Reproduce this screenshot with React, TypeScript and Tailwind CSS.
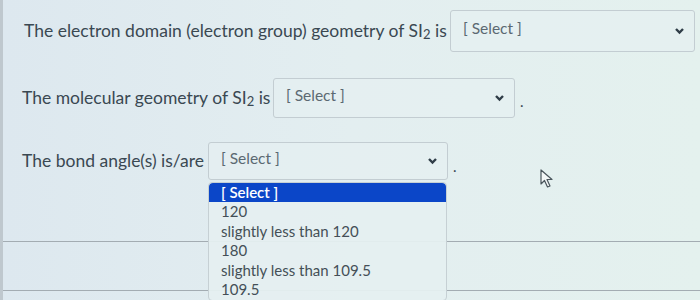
import React from 'react';

const OPTIONS = ['120', 'slightly less than 120', '180', 'slightly less than 109.5', '109.5'];

const Chevron = () => (
  <svg width="11" height="8" viewBox="0 0 11 8" className="shrink-0">
    <path d="M2 2 L5.5 5.5 L9 2" fill="none" stroke="#2f3d47" strokeWidth="2.4" />
  </svg>
);

const SelectBox: React.FC<{ className: string }> = ({ className }) => (
  <div
    className={`flex items-center justify-between border border-[#c3cdd2] rounded-[3px] bg-[#e6f0f1]/60 pl-[12px] pr-[9px] ${className}`}
  >
    <span className="text-[15.5px] text-[#5b6972] -mt-[4px]">[ Select ]</span>
    <Chevron />
  </div>
);

const Formula = () => (
  <span>
    SI<sub className="text-[13px] relative top-[2px]">2</sub>
  </span>
);

export default function App() {
  return (
    <div
      className="relative w-[700px] h-[300px] overflow-hidden bg-gradient-to-r from-[#dde8ef] via-[#e3eef0] to-[#e4f1ee] text-[#3a4852] border-l-[3px] border-[#bfc8ce]"
      style={{ fontFamily: 'Lato, "Open Sans", sans-serif' }}
    >
      <div className="flex flex-col pt-[10px]">
        <div className="flex items-center h-[42px] pl-[21px]">
          <span className="text-[17.5px] w-[426px] whitespace-nowrap">
            The electron domain (electron group) geometry of <Formula /> is
          </span>
          <SelectBox className="w-[245px] h-[42px]" />
        </div>

        <div className="flex items-center h-[40px] pl-[19px] mt-[26px]">
          <span className="text-[17.5px] w-[251px] whitespace-nowrap">
            The molecular geometry of <Formula /> is
          </span>
          <SelectBox className="w-[242px] h-[40px]" />
          <span className="ml-[5px] mt-[6px] text-[15px]">.</span>
        </div>

        <div className="relative flex items-center h-[38px] pl-[19px] mt-[24px]">
          <span className="text-[17.5px] w-[186px] whitespace-nowrap">The bond angle(s) is/are</span>
          <SelectBox className="w-[240px] h-[38px]" />
          <span className="ml-[5px] mt-[10px] text-[15px]">.</span>

          <div className="absolute left-[205px] top-[40px] w-[239px] z-10 rounded-[4px] border border-[#c6d0d4] bg-[#e5eff0]/95 overflow-hidden text-[15px] text-[#444f57]">
            <div className="bg-[#0b46c8] text-white font-semibold pl-[12px] h-[19px] leading-[18px] rounded-t-[4px]">
              [ Select ]
            </div>
            {OPTIONS.map(o => (
              <div key={o} className="pl-[12px] h-[19.5px] leading-[19.5px]">
                {o}
              </div>
            ))}
          </div>
        </div>

        <div className="mt-[61px] h-[50px] border-t border-b border-[#a3acb2]" />
      </div>

      <svg className="absolute left-[537px] top-[169px]" width="16" height="20" viewBox="0 0 16 20">
        <path
          d="M1 1 L1 15 L4.5 11.5 L7.5 18 L10 17 L7 10.5 L12 10.5 Z"
          fill="#f3f7f7"
          stroke="#4a555c"
          strokeWidth="1.2"
          strokeLinejoin="round"
        />
      </svg>
    </div>
  );
}
